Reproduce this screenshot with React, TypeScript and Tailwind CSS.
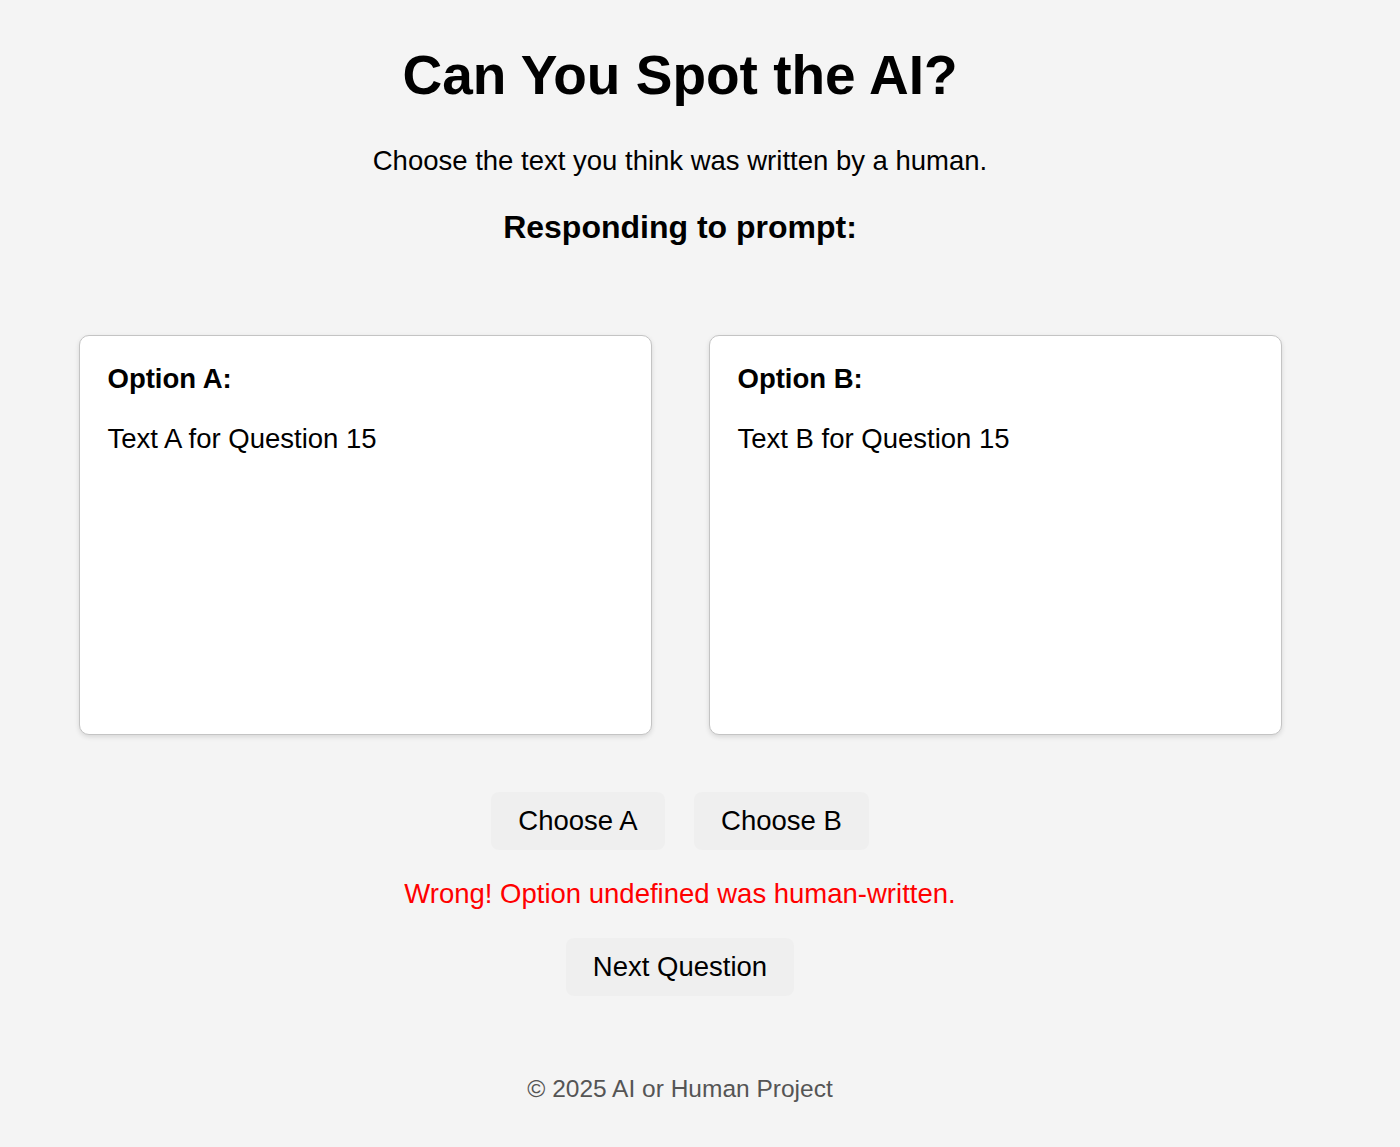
import React from "react";

export default function App() {
  return (
    <div className="min-h-[1147px] bg-[#f4f4f4] text-black font-['Liberation_Sans',Arial,Helvetica,sans-serif]">
      <div className="w-[1360px] flex flex-col items-center">
        <h1 className="mt-[43px] text-[55px] leading-[64px] font-bold">Can You Spot the AI?</h1>
        <p className="mt-[38px] text-[27.5px] leading-[32px]">Choose the text you think was written by a human.</p>
        <h3 className="mt-[31px] text-[32px] leading-[38px] font-bold">Responding to prompt:</h3>
        <div className="mt-[89px] flex gap-[57px]">
          {["A", "B"].map((l) => (
            <div
              key={l}
              className="w-[573px] h-[400px] bg-white border border-[#c4c4c4] rounded-[10px] shadow-[0_2px_5px_rgba(0,0,0,0.12)] pl-[28px] pt-[27px]"
            >
              <div className="text-[27.5px] leading-[32px] font-bold">Option {l}:</div>
              <div className="mt-[28px] text-[27.5px] leading-[32px]">Text {l} for Question 15</div>
            </div>
          ))}
        </div>
        <div className="mt-[57px] flex gap-[29px]">
          <button className="w-[174px] h-[58px] bg-[#efefef] rounded-[8px] text-[27.5px]">Choose A</button>
          <button className="w-[175px] h-[58px] bg-[#efefef] rounded-[8px] text-[27.5px]">Choose B</button>
        </div>
        <p className="mt-[28px] text-[27.5px] leading-[32px] text-[#ff0000]">Wrong! Option undefined was human-written.</p>
        <button className="mt-[28px] w-[228px] h-[58px] bg-[#efefef] rounded-[8px] text-[27.5px]">Next Question</button>
        <footer className="mt-[78px] text-[24.5px] leading-[30px] text-[#555555]">© 2025 AI or Human Project</footer>
      </div>
    </div>
  );
}
